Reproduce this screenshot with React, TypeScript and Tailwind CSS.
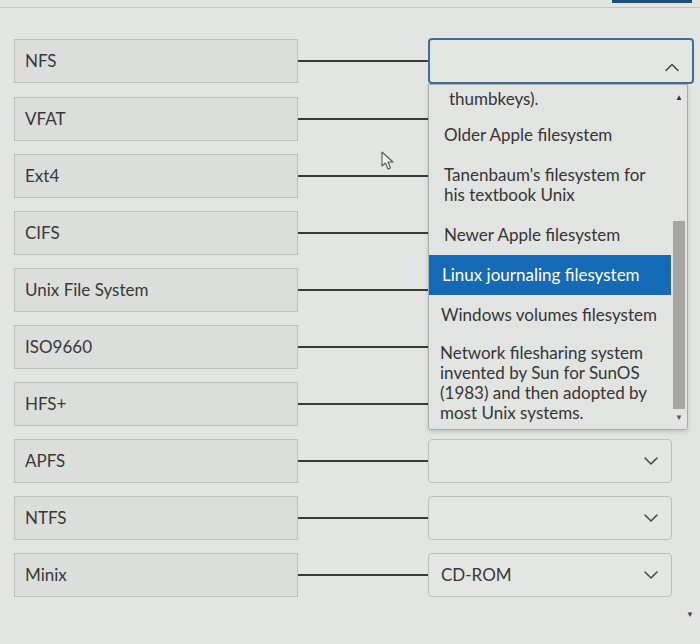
import React from "react";

const rows = [
  { label: "NFS", value: "" },
  { label: "VFAT", value: "" },
  { label: "Ext4", value: "" },
  { label: "CIFS", value: "" },
  { label: "Unix File System", value: "" },
  { label: "ISO9660", value: "" },
  { label: "HFS+", value: "" },
  { label: "APFS", value: "" },
  { label: "NTFS", value: "" },
  { label: "Minix", value: "CD-ROM" },
];

const options = [
  "Older Apple filesystem",
  "Tanenbaum's filesystem for his textbook Unix",
  "Newer Apple filesystem",
  "Linux journaling filesystem",
  "Windows volumes filesystem",
  "Network filesharing system invented by Sun for SunOS (1983) and then adopted by most Unix systems.",
];

function Chevron({ up }: { up?: boolean }) {
  return (
    <svg width="16" height="10" viewBox="0 0 16 10" className="shrink-0">
      <path
        d={up ? "M2 8.5 L8 2.5 L14 8.5" : "M2 2 L8 8 L14 2"}
        fill="none"
        stroke="#4a4a4a"
        strokeWidth="1.6"
        strokeLinecap="round"
        strokeLinejoin="round"
      />
    </svg>
  );
}

function optionClass(o: string) {
  if (o === "Linux journaling filesystem") return "bg-[#156ab5] px-[13px] py-[10px] text-white";
  if (o.startsWith("Network")) return "px-[11px] pb-[6px] pt-[8px]";
  if (o.startsWith("Windows")) return "whitespace-nowrap px-[12px] py-[10px]";
  return "px-[15px] py-[10px]";
}

function Dropdown() {
  return (
    <div className="absolute left-0 top-[46px] z-10 flex h-[346px] w-[260px] overflow-hidden rounded-b-[3px] border border-[#a9aba8] bg-[#e2e4e1] shadow-[0_2px_4px_rgba(0,0,0,0.15)]">
      <ul className="flex-1 text-[17px] leading-[20px] text-[#353535]">
        <li className="flex h-[30px] items-end px-[20px] pb-[6px]">thumbkeys).</li>
        {options.map((o) => (
          <li key={o} className={optionClass(o)}>
            {o}
          </li>
        ))}
      </ul>
      <div className="flex w-[16px] flex-col items-center bg-[#e4e5e2] py-[8px]">
        <span className="text-[8px] leading-none text-[#333]">▲</span>
        <div className="mb-[4px] mt-[120px] w-[12px] flex-1 bg-[#a6a7a5]" />
        <span className="text-[8px] leading-none text-[#555]">▼</span>
      </div>
    </div>
  );
}

export default function App() {
  return (
    <div
      className="relative h-[644px] w-[700px] overflow-hidden bg-[#e3e5e2]"
      style={{ fontFamily: "Lato, 'Open Sans', sans-serif" }}
    >
      <div className="absolute right-[8px] top-0 h-[3px] w-[80px] bg-[#1e4f78]" />
      <div className="h-[8px] border-b border-[#c4c5c2]" />

      <div className="flex flex-col gap-[13px] pl-[14px] pt-[30px]">
        {rows.map((r, i) => (
          <div key={r.label} className="flex items-center">
            <div className="flex h-[44px] w-[284px] items-center border border-[#bdbfbc] bg-[#dcdedb] px-[10px] text-[17px] text-[#383838]">
              {r.label}
            </div>
            <div className="h-[2px] w-[130px] bg-[#3a3a3a]" />
            <div className="relative">
              <div
                className={
                  i === 0
                    ? "flex h-[46px] w-[266px] items-center justify-between rounded-[4px] border-2 border-[#3e6f99] bg-[#e4e6e3] px-[12px] pt-[12px] text-[17px] text-[#383838]"
                    : "flex h-[44px] w-[244px] items-center justify-between rounded-[4px] border border-[#bdbfbc] bg-[#e4e6e3] px-[12px] text-[17px] text-[#383838]"
                }
              >
                <span>{r.value}</span>
                <Chevron up={i === 0} />
              </div>
              {i === 0 && <Dropdown />}
            </div>
          </div>
        ))}
      </div>

      <span className="absolute right-[6px] top-[608px] text-[8px] text-[#444]">▼</span>

      <svg className="absolute left-[381px] top-[151px]" width="14" height="20" viewBox="0 0 14 20">
        <path d="M1 1 L1 15 L4.5 12 L7 18 L9.5 17 L7 11 L12 11 Z" fill="#f4f4f4" stroke="#555" strokeWidth="1.1" strokeLinejoin="round" />
      </svg>
    </div>
  );
}
